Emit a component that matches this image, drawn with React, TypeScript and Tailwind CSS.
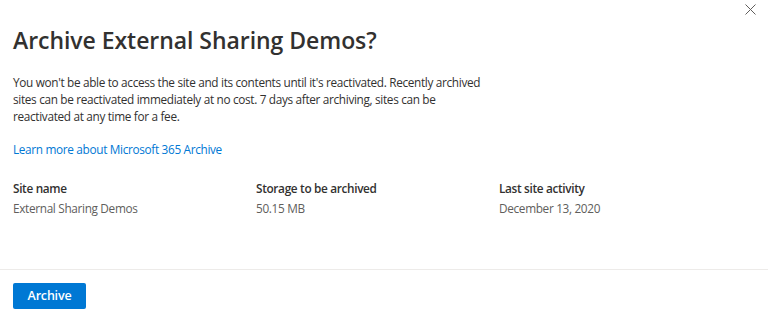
import React from "react";

export default function App() {
  const cols = [
    { label: "Site name", value: "External Sharing Demos" },
    { label: "Storage to be archived", value: "50.15 MB" },
    { label: "Last site activity", value: "December 13, 2020" },
  ];
  return (
    <div
      className="relative w-[768px] h-[319px] bg-white overflow-hidden flex flex-col text-[#323130]"
      style={{ fontFamily: '"Open Sans", "Noto Sans", Arial, sans-serif' }}
    >
      <button className="absolute right-[11px] top-[2px] w-[14px] h-[14px] flex items-center justify-center text-[#605e5c]">
        <svg width="11" height="11" viewBox="0 0 11 11" fill="none" stroke="currentColor" strokeWidth="1">
          <path d="M0.5 0.5 L10.5 10.5 M10.5 0.5 L0.5 10.5" />
        </svg>
      </button>
      <div className="flex flex-col px-[13px] pt-[25px] flex-1">
        <h1 className="text-[23px] leading-[30px] font-semibold tracking-[-0.05px]">
          Archive External Sharing Demos?
        </h1>
        <p className="mt-[19px] text-[11.8px] leading-[17px] tracking-[-0.33px] w-[480px]">
          You won't be able to access the site and its contents until it's reactivated. Recently archived sites can be reactivated immediately at no cost. 7 days after archiving, sites can be reactivated at any time for a fee.
        </p>
        <a className="mt-[16px] text-[11.8px] leading-[17px] tracking-[-0.33px] text-[#0078d4] w-fit" href="#">
          Learn more about Microsoft 365 Archive
        </a>
        <div className="mt-[22px] grid grid-cols-[243px_243px_243px] text-[11.8px] tracking-[-0.33px]">
          {cols.map((c) => (
            <div key={c.label} className="flex flex-col">
              <div className="leading-[17px] font-semibold text-[#323130]">{c.label}</div>
              <div className="mt-[3px] leading-[17px] text-[#605e5c]">{c.value}</div>
            </div>
          ))}
        </div>
      </div>
      <div className="border-t border-[#edebe9] px-[13px] pt-[13px] h-[50px] flex items-start">
        <button className="h-[26px] w-[73px] rounded-[2px] bg-[#0078d4] text-white text-[12.5px] font-semibold tracking-[-0.2px]">
          Archive
        </button>
      </div>
    </div>
  );
}
